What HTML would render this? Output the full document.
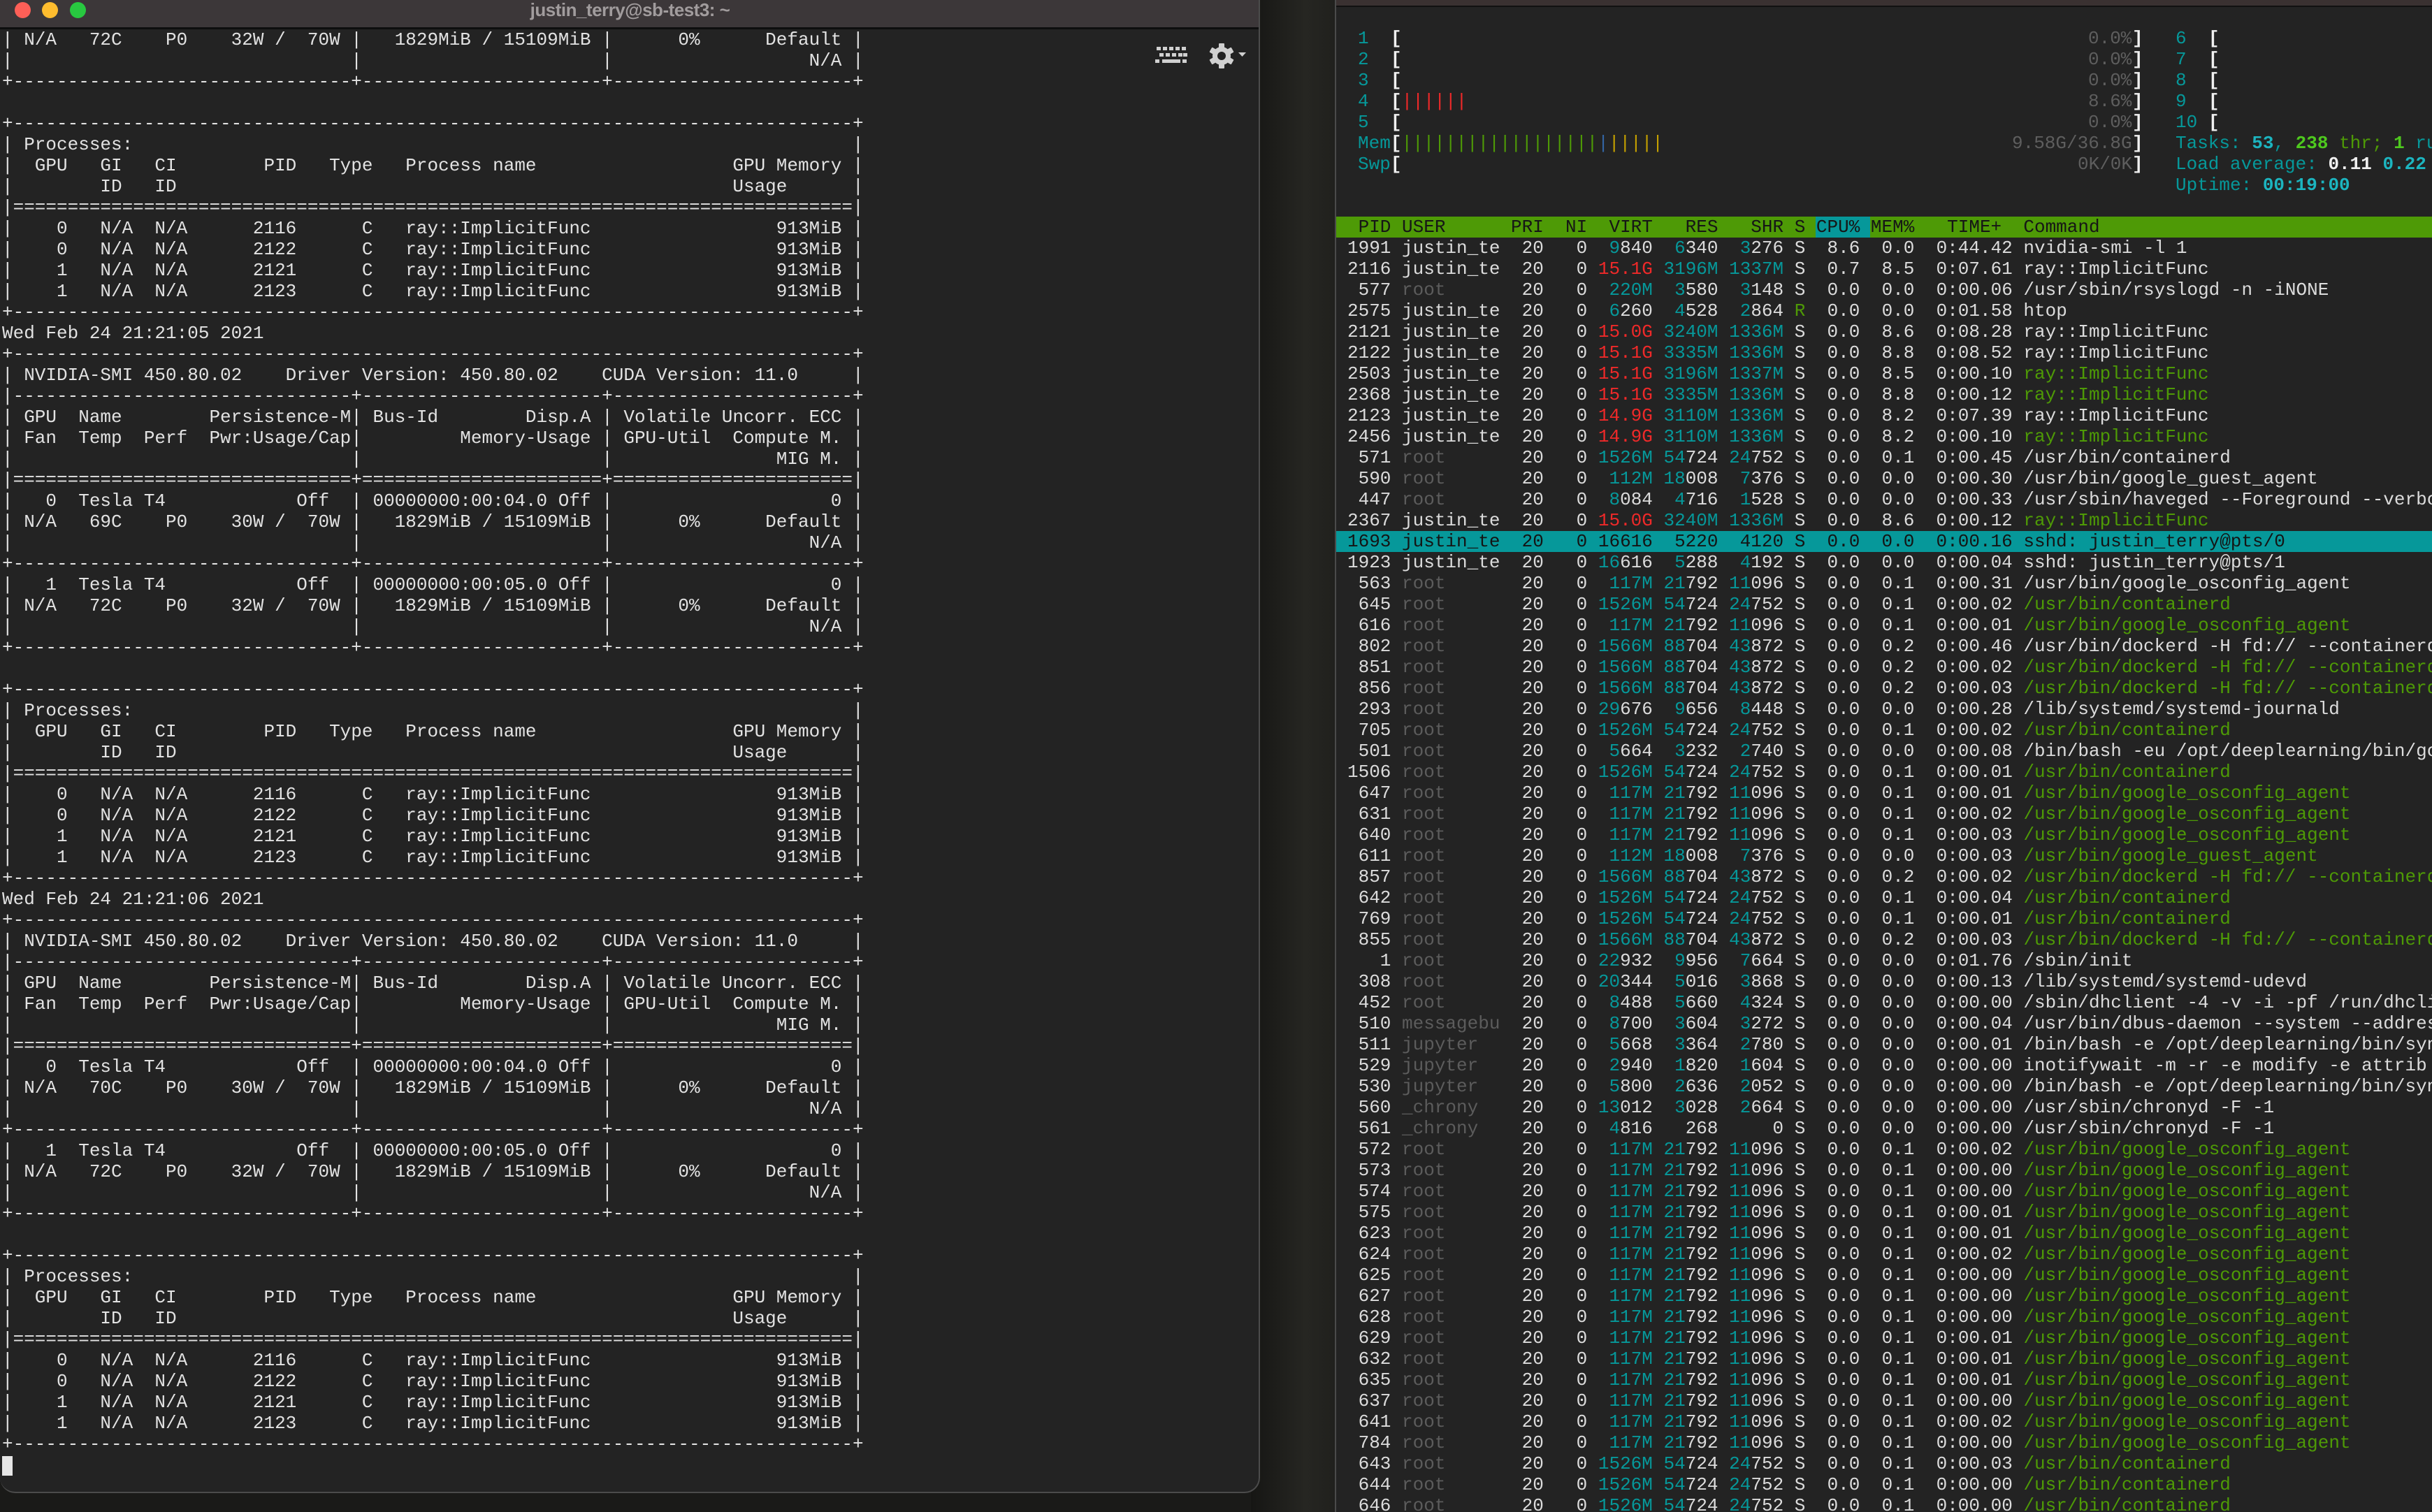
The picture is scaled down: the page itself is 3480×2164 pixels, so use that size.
<!DOCTYPE html>
<html><head><meta charset="utf-8">
<style>
*{margin:0;padding:0;box-sizing:border-box}
html,body{width:3480px;height:2164px;overflow:hidden;background:#1a1a18}
body{position:relative;font-family:"Liberation Mono",monospace;font-size:26px;line-height:30px;color:#dcdcdc}
.gap{position:absolute;left:1790px;top:0;width:130px;height:2164px;background:linear-gradient(90deg,#161614,#262622 60%,#1f1f1c)}
#lw{position:absolute;left:0;top:-24px;width:1803px;height:2161px;background:#232323;border-radius:22px;border:2px solid #4b4b4b;border-top:none;border-left:none;overflow:hidden}
#tb{position:absolute;left:0;top:0;width:100%;height:66px;background:#3c3739;border-bottom:3px solid #0e0e0e}
.dot{position:absolute;top:27px;width:23px;height:23px;border-radius:50%}
#title{position:absolute;left:0;width:1803px;top:24px;text-align:center;font-family:"Liberation Sans",sans-serif;font-weight:bold;font-size:26px;line-height:28px;color:#a19c9d;letter-spacing:-0.5px}
#lt{position:absolute;left:3px;top:66px;white-space:pre;color:#e2e2e2}
#cur{position:absolute;left:3px;top:2108px;width:15px;height:28px;background:#e6e6e6}
#rw{position:absolute;left:1910px;top:0;width:1570px;height:2164px;background:#232323;border-left:2px solid #4a4a4a;overflow:hidden}
#rtb{position:absolute;left:0;top:0;width:100%;height:10px;background:#3a3131;border-bottom:2px solid #111}
.ht{position:absolute;left:16px;white-space:pre;}
.m{position:absolute;white-space:pre}
i{font-style:normal;color:#06989a}
s{text-decoration:none;color:#ef2929}
u{text-decoration:none;color:#5c5c5c}
em{font-style:normal;color:#4e9a06}
b{color:#f0f0f0;font-weight:bold}
.gv{color:#5e5e5e}
#hdr{position:absolute;left:0;top:310px;width:100%;height:30px;background:#4e9a06;color:#161616}
#cpuh{position:absolute;left:686px;top:0;width:78px;height:30px;background:#06989a}
#rows{position:absolute;left:16px;top:340px}
#rows div{height:30px;white-space:pre}
#rows .sel{background:#06989a;color:#141414;margin-left:-16px;padding-left:16px;width:1570px}
</style></head><body>
<div class="gap"></div>
<div id="lw">
 <div id="tb">
  <div class="dot" style="left:21px;background:#fe5f57"></div>
  <div class="dot" style="left:60px;background:#febc2e"></div>
  <div class="dot" style="left:100px;background:#28c840"></div>
  <div id="title">justin_terry@sb-test3: ~</div>
 </div>
 <svg style="position:absolute;left:1653px;top:91px" width="46" height="24" viewBox="0 0 46 24" fill="#d0d0d0">
  <rect x="2" y="0" width="6" height="5"/><rect x="11" y="0" width="6" height="5"/><rect x="20" y="0" width="6" height="5"/><rect x="29" y="0" width="6" height="5"/><rect x="38" y="0" width="6" height="5"/>
  <rect x="6" y="9" width="6" height="5"/><rect x="15" y="9" width="6" height="5"/><rect x="24" y="9" width="6" height="5"/><rect x="33" y="9" width="6" height="5"/><rect x="40" y="9" width="6" height="5"/>
  <rect x="0" y="18" width="6" height="5"/><rect x="10" y="18" width="26" height="5"/><rect x="39" y="18" width="6" height="5"/>
 </svg>
 <svg style="position:absolute;left:1728px;top:84px" width="40" height="40" viewBox="0 0 40 40">
  <g fill="#d0d0d0" transform="translate(20,20)">
   <rect x="-4" y="-18" width="8" height="36" rx="1"/>
   <rect x="-4" y="-18" width="8" height="36" rx="1" transform="rotate(60)"/>
   <rect x="-4" y="-18" width="8" height="36" rx="1" transform="rotate(120)"/>
   <circle r="13"/>
  </g>
  <circle cx="20" cy="20" r="6" fill="#232323"/>
 </svg>
 <svg style="position:absolute;left:1772px;top:99px" width="11" height="6" viewBox="0 0 11 6"><path d="M0 0H11L5.5 6Z" fill="#d0d0d0"/></svg>
 <div id="lt">| N/A   72C    P0    32W /  70W |   1829MiB / 15109MiB |      0%      Default |
|                               |                      |                  N/A |
+-------------------------------+----------------------+----------------------+

+-----------------------------------------------------------------------------+
| Processes:                                                                  |
|  GPU   GI   CI        PID   Type   Process name                  GPU Memory |
|        ID   ID                                                   Usage      |
|=============================================================================|
|    0   N/A  N/A      2116      C   ray::ImplicitFunc                 913MiB |
|    0   N/A  N/A      2122      C   ray::ImplicitFunc                 913MiB |
|    1   N/A  N/A      2121      C   ray::ImplicitFunc                 913MiB |
|    1   N/A  N/A      2123      C   ray::ImplicitFunc                 913MiB |
+-----------------------------------------------------------------------------+
Wed Feb 24 21:21:05 2021
+-----------------------------------------------------------------------------+
| NVIDIA-SMI 450.80.02    Driver Version: 450.80.02    CUDA Version: 11.0     |
|-------------------------------+----------------------+----------------------+
| GPU  Name        Persistence-M| Bus-Id        Disp.A | Volatile Uncorr. ECC |
| Fan  Temp  Perf  Pwr:Usage/Cap|         Memory-Usage | GPU-Util  Compute M. |
|                               |                      |               MIG M. |
|===============================+======================+======================|
|   0  Tesla T4            Off  | 00000000:00:04.0 Off |                    0 |
| N/A   69C    P0    30W /  70W |   1829MiB / 15109MiB |      0%      Default |
|                               |                      |                  N/A |
+-------------------------------+----------------------+----------------------+
|   1  Tesla T4            Off  | 00000000:00:05.0 Off |                    0 |
| N/A   72C    P0    32W /  70W |   1829MiB / 15109MiB |      0%      Default |
|                               |                      |                  N/A |
+-------------------------------+----------------------+----------------------+

+-----------------------------------------------------------------------------+
| Processes:                                                                  |
|  GPU   GI   CI        PID   Type   Process name                  GPU Memory |
|        ID   ID                                                   Usage      |
|=============================================================================|
|    0   N/A  N/A      2116      C   ray::ImplicitFunc                 913MiB |
|    0   N/A  N/A      2122      C   ray::ImplicitFunc                 913MiB |
|    1   N/A  N/A      2121      C   ray::ImplicitFunc                 913MiB |
|    1   N/A  N/A      2123      C   ray::ImplicitFunc                 913MiB |
+-----------------------------------------------------------------------------+
Wed Feb 24 21:21:06 2021
+-----------------------------------------------------------------------------+
| NVIDIA-SMI 450.80.02    Driver Version: 450.80.02    CUDA Version: 11.0     |
|-------------------------------+----------------------+----------------------+
| GPU  Name        Persistence-M| Bus-Id        Disp.A | Volatile Uncorr. ECC |
| Fan  Temp  Perf  Pwr:Usage/Cap|         Memory-Usage | GPU-Util  Compute M. |
|                               |                      |               MIG M. |
|===============================+======================+======================|
|   0  Tesla T4            Off  | 00000000:00:04.0 Off |                    0 |
| N/A   70C    P0    30W /  70W |   1829MiB / 15109MiB |      0%      Default |
|                               |                      |                  N/A |
+-------------------------------+----------------------+----------------------+
|   1  Tesla T4            Off  | 00000000:00:05.0 Off |                    0 |
| N/A   72C    P0    32W /  70W |   1829MiB / 15109MiB |      0%      Default |
|                               |                      |                  N/A |
+-------------------------------+----------------------+----------------------+

+-----------------------------------------------------------------------------+
| Processes:                                                                  |
|  GPU   GI   CI        PID   Type   Process name                  GPU Memory |
|        ID   ID                                                   Usage      |
|=============================================================================|
|    0   N/A  N/A      2116      C   ray::ImplicitFunc                 913MiB |
|    0   N/A  N/A      2122      C   ray::ImplicitFunc                 913MiB |
|    1   N/A  N/A      2121      C   ray::ImplicitFunc                 913MiB |
|    1   N/A  N/A      2123      C   ray::ImplicitFunc                 913MiB |
+-----------------------------------------------------------------------------+</div>
 <div id="cur"></div>
</div>

<div id="rw">
 <div id="rtb"></div>
 <div class="m" style="top:40px;left:31px"><i>1</i></div><div class="m" style="top:40px;left:78px"><b>[</b></div><div class="m gv" style="top:40px;left:1076px">0.0%</div><div class="m" style="top:40px;left:1139px"><b>]</b></div><div class="m" style="top:40px;left:1201px"><i>6</i></div><div class="m" style="top:40px;left:1248px"><b>[</b></div>
 <div class="m" style="top:70px;left:31px"><i>2</i></div><div class="m" style="top:70px;left:78px"><b>[</b></div><div class="m gv" style="top:70px;left:1076px">0.0%</div><div class="m" style="top:70px;left:1139px"><b>]</b></div><div class="m" style="top:70px;left:1201px"><i>7</i></div><div class="m" style="top:70px;left:1248px"><b>[</b></div>
 <div class="m" style="top:100px;left:31px"><i>3</i></div><div class="m" style="top:100px;left:78px"><b>[</b></div><div class="m gv" style="top:100px;left:1076px">0.0%</div><div class="m" style="top:100px;left:1139px"><b>]</b></div><div class="m" style="top:100px;left:1201px"><i>8</i></div><div class="m" style="top:100px;left:1248px"><b>[</b></div>
 <div class="m" style="top:130px;left:31px"><i>4</i></div><div class="m" style="top:130px;left:78px"><b>[</b><s>||||||</s></div><div class="m gv" style="top:130px;left:1076px">8.6%</div><div class="m" style="top:130px;left:1139px"><b>]</b></div><div class="m" style="top:130px;left:1201px"><i>9</i></div><div class="m" style="top:130px;left:1248px"><b>[</b></div>
 <div class="m" style="top:160px;left:31px"><i>5</i></div><div class="m" style="top:160px;left:78px"><b>[</b></div><div class="m gv" style="top:160px;left:1076px">0.0%</div><div class="m" style="top:160px;left:1139px"><b>]</b></div><div class="m" style="top:160px;left:1201px"><i>10</i></div><div class="m" style="top:160px;left:1248px"><b>[</b></div>
 <div class="m" style="top:190px;left:31px"><i>Mem</i><b>[</b><em>||||||||||||||||||</em><span style="color:#3465a4">|</span><span style="color:#c4a000">|||||</span></div><div class="m gv" style="top:190px;left:967px">9.58G/36.8G</div><div class="m" style="top:190px;left:1139px"><b>]</b></div>
 <div class="m" style="top:190px;left:1201px"><i>Tasks: </i><b style="color:#1cb5c0">53</b><i>, </i><b style="color:#4ec91e">238</b><em> thr; </em><b style="color:#4ec91e">1</b><i> running</i></div>
 <div class="m" style="top:220px;left:31px"><i>Swp</i><b>[</b></div><div class="m gv" style="top:220px;left:1061px">0K/0K</div><div class="m" style="top:220px;left:1139px"><b>]</b></div>
 <div class="m" style="top:220px;left:1201px"><i>Load average: </i><b>0.11</b> <b style="color:#1cb5c0">0.22</b> <i>0.17</i></div>
 <div class="m" style="top:250px;left:1201px"><i>Uptime: </i><b style="color:#1cb5c0">00:19:00</b></div>

 <div id="hdr"><div id="cpuh"></div><div class="ht" style="top:0"> PID USER      PRI  NI  VIRT   RES   SHR S CPU% MEM%   TIME+  Command</div></div>

 <div id="rows"><div>1991 justin_te  20   0  <i>9</i>840  <i>6</i>340  <i>3</i>276 S  8.6  0.0  0:44.42 nvidia-smi -l 1</div><div>2116 justin_te  20   0 <s>15.1G</s> <i>3196M</i> <i>1337M</i> S  0.7  8.5  0:07.61 ray::ImplicitFunc</div><div> 577 <u>root</u>       20   0  <i>220M</i>  <i>3</i>580  <i>3</i>148 S  0.0  0.0  0:00.06 /usr/sbin/rsyslogd -n -iNONE</div><div>2575 justin_te  20   0  <i>6</i>260  <i>4</i>528  <i>2</i>864 <em>R</em>  0.0  0.0  0:01.58 htop</div><div>2121 justin_te  20   0 <s>15.0G</s> <i>3240M</i> <i>1336M</i> S  0.0  8.6  0:08.28 ray::ImplicitFunc</div><div>2122 justin_te  20   0 <s>15.1G</s> <i>3335M</i> <i>1336M</i> S  0.0  8.8  0:08.52 ray::ImplicitFunc</div><div>2503 justin_te  20   0 <s>15.1G</s> <i>3196M</i> <i>1337M</i> S  0.0  8.5  0:00.10 <em>ray::ImplicitFunc</em></div><div>2368 justin_te  20   0 <s>15.1G</s> <i>3335M</i> <i>1336M</i> S  0.0  8.8  0:00.12 <em>ray::ImplicitFunc</em></div><div>2123 justin_te  20   0 <s>14.9G</s> <i>3110M</i> <i>1336M</i> S  0.0  8.2  0:07.39 ray::ImplicitFunc</div><div>2456 justin_te  20   0 <s>14.9G</s> <i>3110M</i> <i>1336M</i> S  0.0  8.2  0:00.10 <em>ray::ImplicitFunc</em></div><div> 571 <u>root</u>       20   0 <i>1526M</i> <i>54</i>724 <i>24</i>752 S  0.0  0.1  0:00.45 /usr/bin/containerd</div><div> 590 <u>root</u>       20   0  <i>112M</i> <i>18</i>008  <i>7</i>376 S  0.0  0.0  0:00.30 /usr/bin/google_guest_agent</div><div> 447 <u>root</u>       20   0  <i>8</i>084  <i>4</i>716  <i>1</i>528 S  0.0  0.0  0:00.33 /usr/sbin/haveged --Foreground --verbose=1</div><div>2367 justin_te  20   0 <s>15.0G</s> <i>3240M</i> <i>1336M</i> S  0.0  8.6  0:00.12 <em>ray::ImplicitFunc</em></div><div class="sel">1693 justin_te  20   0 16616  5220  4120 S  0.0  0.0  0:00.16 sshd: justin_terry@pts/0</div><div>1923 justin_te  20   0 <i>16</i>616  <i>5</i>288  <i>4</i>192 S  0.0  0.0  0:00.04 sshd: justin_terry@pts/1</div><div> 563 <u>root</u>       20   0  <i>117M</i> <i>21</i>792 <i>11</i>096 S  0.0  0.1  0:00.31 /usr/bin/google_osconfig_agent</div><div> 645 <u>root</u>       20   0 <i>1526M</i> <i>54</i>724 <i>24</i>752 S  0.0  0.1  0:00.02 <em>/usr/bin/containerd</em></div><div> 616 <u>root</u>       20   0  <i>117M</i> <i>21</i>792 <i>11</i>096 S  0.0  0.1  0:00.01 <em>/usr/bin/google_osconfig_agent</em></div><div> 802 <u>root</u>       20   0 <i>1566M</i> <i>88</i>704 <i>43</i>872 S  0.0  0.2  0:00.46 /usr/bin/dockerd -H fd:// --containerd=/run/containerd/containerd.sock</div><div> 851 <u>root</u>       20   0 <i>1566M</i> <i>88</i>704 <i>43</i>872 S  0.0  0.2  0:00.02 <em>/usr/bin/dockerd -H fd:// --containerd=/run/containerd/containerd.sock</em></div><div> 856 <u>root</u>       20   0 <i>1566M</i> <i>88</i>704 <i>43</i>872 S  0.0  0.2  0:00.03 <em>/usr/bin/dockerd -H fd:// --containerd=/run/containerd/containerd.sock</em></div><div> 293 <u>root</u>       20   0 <i>29</i>676  <i>9</i>656  <i>8</i>448 S  0.0  0.0  0:00.28 /lib/systemd/systemd-journald</div><div> 705 <u>root</u>       20   0 <i>1526M</i> <i>54</i>724 <i>24</i>752 S  0.0  0.1  0:00.02 <em>/usr/bin/containerd</em></div><div> 501 <u>root</u>       20   0  <i>5</i>664  <i>3</i>232  <i>2</i>740 S  0.0  0.0  0:00.08 /bin/bash -eu /opt/deeplearning/bin/google_</div><div>1506 <u>root</u>       20   0 <i>1526M</i> <i>54</i>724 <i>24</i>752 S  0.0  0.1  0:00.01 <em>/usr/bin/containerd</em></div><div> 647 <u>root</u>       20   0  <i>117M</i> <i>21</i>792 <i>11</i>096 S  0.0  0.1  0:00.01 <em>/usr/bin/google_osconfig_agent</em></div><div> 631 <u>root</u>       20   0  <i>117M</i> <i>21</i>792 <i>11</i>096 S  0.0  0.1  0:00.02 <em>/usr/bin/google_osconfig_agent</em></div><div> 640 <u>root</u>       20   0  <i>117M</i> <i>21</i>792 <i>11</i>096 S  0.0  0.1  0:00.03 <em>/usr/bin/google_osconfig_agent</em></div><div> 611 <u>root</u>       20   0  <i>112M</i> <i>18</i>008  <i>7</i>376 S  0.0  0.0  0:00.03 <em>/usr/bin/google_guest_agent</em></div><div> 857 <u>root</u>       20   0 <i>1566M</i> <i>88</i>704 <i>43</i>872 S  0.0  0.2  0:00.02 <em>/usr/bin/dockerd -H fd:// --containerd=/run/containerd/containerd.sock</em></div><div> 642 <u>root</u>       20   0 <i>1526M</i> <i>54</i>724 <i>24</i>752 S  0.0  0.1  0:00.04 <em>/usr/bin/containerd</em></div><div> 769 <u>root</u>       20   0 <i>1526M</i> <i>54</i>724 <i>24</i>752 S  0.0  0.1  0:00.01 <em>/usr/bin/containerd</em></div><div> 855 <u>root</u>       20   0 <i>1566M</i> <i>88</i>704 <i>43</i>872 S  0.0  0.2  0:00.03 <em>/usr/bin/dockerd -H fd:// --containerd=/run/containerd/containerd.sock</em></div><div>   1 <u>root</u>       20   0 <i>22</i>932  <i>9</i>956  <i>7</i>664 S  0.0  0.0  0:01.76 /sbin/init</div><div> 308 <u>root</u>       20   0 <i>20</i>344  <i>5</i>016  <i>3</i>868 S  0.0  0.0  0:00.13 /lib/systemd/systemd-udevd</div><div> 452 <u>root</u>       20   0  <i>8</i>488  <i>5</i>660  <i>4</i>324 S  0.0  0.0  0:00.00 /sbin/dhclient -4 -v -i -pf /run/dhclient.ens4.pid</div><div> 510 <u>messagebu</u>  20   0  <i>8</i>700  <i>3</i>604  <i>3</i>272 S  0.0  0.0  0:00.04 /usr/bin/dbus-daemon --system --address=systemd:</div><div> 511 <u>jupyter</u>    20   0  <i>5</i>668  <i>3</i>364  <i>2</i>780 S  0.0  0.0  0:00.01 /bin/bash -e /opt/deeplearning/bin/sync</div><div> 529 <u>jupyter</u>    20   0  <i>2</i>940  <i>1</i>820  <i>1</i>604 S  0.0  0.0  0:00.00 inotifywait -m -r -e modify -e attrib</div><div> 530 <u>jupyter</u>    20   0  <i>5</i>800  <i>2</i>636  <i>2</i>052 S  0.0  0.0  0:00.00 /bin/bash -e /opt/deeplearning/bin/sync</div><div> 560 <u>_chrony</u>    20   0 <i>13</i>012  <i>3</i>028  <i>2</i>664 S  0.0  0.0  0:00.00 /usr/sbin/chronyd -F -1</div><div> 561 <u>_chrony</u>    20   0  <i>4</i>816   268     0 S  0.0  0.0  0:00.00 /usr/sbin/chronyd -F -1</div><div> 572 <u>root</u>       20   0  <i>117M</i> <i>21</i>792 <i>11</i>096 S  0.0  0.1  0:00.02 <em>/usr/bin/google_osconfig_agent</em></div><div> 573 <u>root</u>       20   0  <i>117M</i> <i>21</i>792 <i>11</i>096 S  0.0  0.1  0:00.00 <em>/usr/bin/google_osconfig_agent</em></div><div> 574 <u>root</u>       20   0  <i>117M</i> <i>21</i>792 <i>11</i>096 S  0.0  0.1  0:00.00 <em>/usr/bin/google_osconfig_agent</em></div><div> 575 <u>root</u>       20   0  <i>117M</i> <i>21</i>792 <i>11</i>096 S  0.0  0.1  0:00.01 <em>/usr/bin/google_osconfig_agent</em></div><div> 623 <u>root</u>       20   0  <i>117M</i> <i>21</i>792 <i>11</i>096 S  0.0  0.1  0:00.01 <em>/usr/bin/google_osconfig_agent</em></div><div> 624 <u>root</u>       20   0  <i>117M</i> <i>21</i>792 <i>11</i>096 S  0.0  0.1  0:00.02 <em>/usr/bin/google_osconfig_agent</em></div><div> 625 <u>root</u>       20   0  <i>117M</i> <i>21</i>792 <i>11</i>096 S  0.0  0.1  0:00.00 <em>/usr/bin/google_osconfig_agent</em></div><div> 627 <u>root</u>       20   0  <i>117M</i> <i>21</i>792 <i>11</i>096 S  0.0  0.1  0:00.00 <em>/usr/bin/google_osconfig_agent</em></div><div> 628 <u>root</u>       20   0  <i>117M</i> <i>21</i>792 <i>11</i>096 S  0.0  0.1  0:00.00 <em>/usr/bin/google_osconfig_agent</em></div><div> 629 <u>root</u>       20   0  <i>117M</i> <i>21</i>792 <i>11</i>096 S  0.0  0.1  0:00.01 <em>/usr/bin/google_osconfig_agent</em></div><div> 632 <u>root</u>       20   0  <i>117M</i> <i>21</i>792 <i>11</i>096 S  0.0  0.1  0:00.01 <em>/usr/bin/google_osconfig_agent</em></div><div> 635 <u>root</u>       20   0  <i>117M</i> <i>21</i>792 <i>11</i>096 S  0.0  0.1  0:00.01 <em>/usr/bin/google_osconfig_agent</em></div><div> 637 <u>root</u>       20   0  <i>117M</i> <i>21</i>792 <i>11</i>096 S  0.0  0.1  0:00.00 <em>/usr/bin/google_osconfig_agent</em></div><div> 641 <u>root</u>       20   0  <i>117M</i> <i>21</i>792 <i>11</i>096 S  0.0  0.1  0:00.02 <em>/usr/bin/google_osconfig_agent</em></div><div> 784 <u>root</u>       20   0  <i>117M</i> <i>21</i>792 <i>11</i>096 S  0.0  0.1  0:00.00 <em>/usr/bin/google_osconfig_agent</em></div><div> 643 <u>root</u>       20   0 <i>1526M</i> <i>54</i>724 <i>24</i>752 S  0.0  0.1  0:00.03 <em>/usr/bin/containerd</em></div><div> 644 <u>root</u>       20   0 <i>1526M</i> <i>54</i>724 <i>24</i>752 S  0.0  0.1  0:00.00 <em>/usr/bin/containerd</em></div><div> 646 <u>root</u>       20   0 <i>1526M</i> <i>54</i>724 <i>24</i>752 S  0.0  0.1  0:00.00 <em>/usr/bin/containerd</em></div></div>
</div>
</body></html>
